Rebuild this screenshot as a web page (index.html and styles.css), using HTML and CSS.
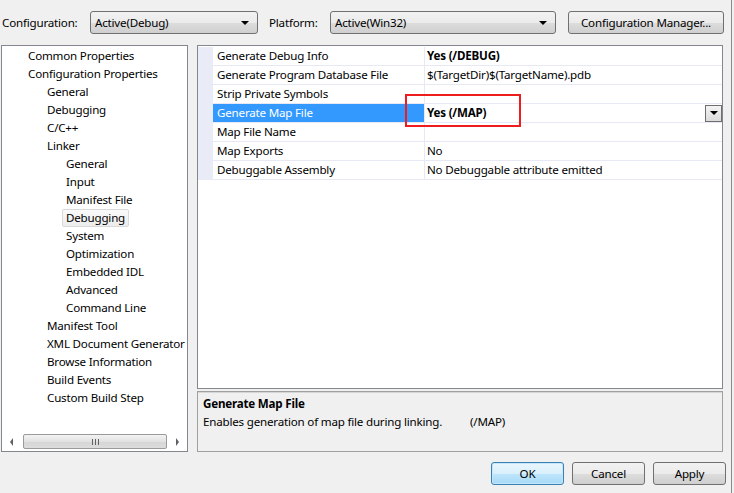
FILE: index.html
```html
<!DOCTYPE html>
<html lang="en">

<head>
  <meta charset="UTF-8">
  <meta name="viewport" content="width=device-width, initial-scale=1.0">
  <link rel="stylesheet" href="styles.css">
</head>

<body>
  <div class="dialog">
    <div class="toolbar">
      <span class="toolbar-label">Configuration:</span>
      <div class="combo combo-config">
        <span>Active(Debug)</span>
        <span class="combo-arrow"></span>
      </div>
      <span class="toolbar-label platform-label">Platform:</span>
      <div class="combo combo-platform">
        <span>Active(Win32)</span>
        <span class="combo-arrow"></span>
      </div>
      <button class="btn btn-manager">Configuration Manager...</button>
    </div>

    <div class="main">
      <div class="tree-panel">
        <div class="tree">
          <div class="node l1">Common Properties</div>
          <div class="node l1">Configuration Properties</div>
          <div class="node l2">General</div>
          <div class="node l2">Debugging</div>
          <div class="node l2">C/C++</div>
          <div class="node l2">Linker</div>
          <div class="node l3">General</div>
          <div class="node l3">Input</div>
          <div class="node l3">Manifest File</div>
          <div class="node l3"><span class="node-selected">Debugging</span></div>
          <div class="node l3">System</div>
          <div class="node l3">Optimization</div>
          <div class="node l3">Embedded IDL</div>
          <div class="node l3">Advanced</div>
          <div class="node l3">Command Line</div>
          <div class="node l2">Manifest Tool</div>
          <div class="node l2">XML Document Generator</div>
          <div class="node l2">Browse Information</div>
          <div class="node l2">Build Events</div>
          <div class="node l2">Custom Build Step</div>
        </div>
        <div class="hscroll">
          <span class="scroll-arrow arrow-left"></span>
          <div class="scroll-thumb"><span class="grip"></span></div>
          <span class="scroll-arrow arrow-right"></span>
        </div>
      </div>

      <div class="right-col">
        <div class="grid">
          <div class="grid-row">
            <div class="gutter"></div>
            <div class="cell-name">Generate Debug Info</div>
            <div class="cell-value bold">Yes (/DEBUG)</div>
          </div>
          <div class="grid-row">
            <div class="gutter"></div>
            <div class="cell-name">Generate Program Database File</div>
            <div class="cell-value">$(TargetDir)$(TargetName).pdb</div>
          </div>
          <div class="grid-row">
            <div class="gutter"></div>
            <div class="cell-name">Strip Private Symbols</div>
            <div class="cell-value"></div>
          </div>
          <div class="grid-row selected">
            <div class="gutter"></div>
            <div class="cell-name">Generate Map File</div>
            <div class="cell-value bold">Yes (/MAP)
              <span class="cell-drop"><span class="combo-arrow"></span></span>
            </div>
          </div>
          <div class="grid-row">
            <div class="gutter"></div>
            <div class="cell-name">Map File Name</div>
            <div class="cell-value"></div>
          </div>
          <div class="grid-row">
            <div class="gutter"></div>
            <div class="cell-name">Map Exports</div>
            <div class="cell-value">No</div>
          </div>
          <div class="grid-row">
            <div class="gutter"></div>
            <div class="cell-name">Debuggable Assembly</div>
            <div class="cell-value">No Debuggable attribute emitted</div>
          </div>
          <div class="highlight-box"></div>
        </div>

        <div class="description">
          <div class="desc-title">Generate Map File</div>
          <div class="desc-text">Enables generation of map file during linking.<span class="desc-switch">(/MAP)</span></div>
        </div>
      </div>
    </div>

    <div class="footer">
      <button class="btn btn-default">OK</button>
      <button class="btn">Cancel</button>
      <button class="btn">Apply</button>
    </div>
  </div>
</body>

</html>
```

FILE: styles.css
```css
body {
  margin: 0;
  background-color: #f0f0f0;
  font-family: "Segoe UI", "Noto Sans", sans-serif;
  font-size: 11.6px;
  letter-spacing: -0.2px;
  color: #000;
}

.dialog {
  width: 732px;
  height: 493px;
  border-right: 1px solid #8c8c8c;
  box-sizing: border-box;
  display: flex;
  flex-direction: column;
}

/* Top bar */
.toolbar {
  display: flex;
  align-items: center;
  height: 45px;
  box-sizing: border-box;
}

.toolbar-label {
  margin-left: 2px;
  width: 88px;
}

.platform-label {
  margin-left: 11px;
  width: 61px;
}

.combo {
  height: 23px;
  box-sizing: border-box;
  border: 1px solid #707070;
  border-radius: 3px;
  background: linear-gradient(#f2f2f2 0%, #ebebeb 50%, #dddddd 51%, #cfcfcf 100%);
  display: flex;
  align-items: center;
  justify-content: space-between;
  padding: 0 8px 0 4px;
}

.combo-config {
  width: 168px;
}

.combo-platform {
  width: 226px;
}

.combo-arrow {
  width: 0;
  height: 0;
  border-left: 4px solid transparent;
  border-right: 4px solid transparent;
  border-top: 4px solid #000;
}

.btn {
  font-family: inherit;
  font-size: inherit;
  letter-spacing: inherit;
  color: #000;
  height: 23px;
  box-sizing: border-box;
  border: 1px solid #707070;
  border-radius: 3px;
  background: linear-gradient(#f2f2f2 0%, #ebebeb 50%, #dddddd 51%, #cfcfcf 100%);
  padding: 0;
}

.btn-manager {
  margin-left: 12px;
  width: 156px;
}

/* Main area */
.main {
  display: flex;
  height: 407px;
}

.tree-panel {
  width: 187px;
  margin-left: 1px;
  border: 1px solid #828790;
  background: #fff;
  box-sizing: border-box;
  display: flex;
  flex-direction: column;
  justify-content: space-between;
}

.tree {
  padding-top: 1px;
}

.node {
  height: 18px;
  line-height: 18px;
  white-space: nowrap;
}

.l1 {
  padding-left: 26px;
}

.l2 {
  padding-left: 45px;
}

.l3 {
  padding-left: 64px;
}

.node-selected {
  display: inline-block;
  margin-left: -4px;
  padding: 0 3px;
  height: 16px;
  line-height: 16px;
  border: 1px solid #d9d9d9;
  border-radius: 2px;
  background: linear-gradient(#fafafa, #ececec);
}

.hscroll {
  height: 17px;
  display: flex;
  align-items: center;
  margin-bottom: 1px;
  padding: 0 3px;
  background: #fff;
}

.scroll-arrow {
  width: 0;
  height: 0;
  border-top: 4px solid transparent;
  border-bottom: 4px solid transparent;
}

.arrow-left {
  border-right: 3px solid #606060;
  margin: 0 10px 0 5px;
}

.arrow-right {
  border-left: 3px solid #606060;
  margin: 0 5px 0 9px;
}

.scroll-thumb {
  flex: 1;
  height: 15px;
  box-sizing: border-box;
  border: 1px solid #9a9a9a;
  border-radius: 2px;
  background: linear-gradient(#f3f3f3, #e2e2e2 50%, #d6d6d6 51%, #dcdcdc);
  display: flex;
  align-items: center;
  justify-content: center;
}

.grip {
  width: 7px;
  height: 6px;
  background: repeating-linear-gradient(90deg, #606060 0 1px, transparent 1px 3px);
}

.right-col {
  margin-left: 9px;
  width: 526px;
  display: flex;
  flex-direction: column;
}

/* Property grid */
.grid {
  position: relative;
  height: 344px;
  padding-top: 1px;
  border: 1px solid #828790;
  background: #fff;
  box-sizing: border-box;
}

.grid-row {
  display: flex;
  height: 19px;
}

.gutter {
  width: 15px;
  background: #e9ecf7;
}

.cell-name {
  width: 207px;
  padding-left: 4px;
  line-height: 18px;
  border-bottom: 1px solid #e6e9f4;
  border-right: 1px solid #e6e9f4;
  white-space: nowrap;
  overflow: hidden;
}

.cell-value {
  flex: 1;
  padding-left: 2px;
  line-height: 18px;
  border-bottom: 1px solid #e6e9f4;
  display: flex;
  justify-content: space-between;
  align-items: center;
}

.bold {
  font-weight: bold;
}

.selected .cell-name {
  background: #3399ff;
  color: #fff;
}

.cell-drop {
  width: 17px;
  height: 17px;
  box-sizing: border-box;
  border: 1px solid #6e6e6e;
  background: linear-gradient(#f4f4f4, #dcdcdc);
  display: flex;
  align-items: center;
  justify-content: center;
}

.highlight-box {
  position: absolute;
  left: 207px;
  top: 48px;
  width: 112px;
  height: 29px;
  border: 2px solid #ee1c1c;
}

/* Description */
.description {
  margin-top: 2px;
  height: 61px;
  border: 1px solid #a0a0a0;
  box-shadow: inset 0 1px 0 #d6d6d6;
  box-sizing: border-box;
  padding: 3px 5px;
}

.desc-title {
  font-weight: bold;
  line-height: 18px;
}

.desc-text {
  line-height: 18px;
}

.desc-switch {
  margin-left: 28px;
}

/* Footer */
.footer {
  display: flex;
  justify-content: flex-end;
  gap: 8px;
  padding: 10px 5px 0 0;
}

.footer .btn {
  width: 73px;
}

.btn-default {
  border-color: #3c7fb1;
  background: linear-gradient(#eaf6fd 0%, #d9f0fc 50%, #bee6fd 51%, #a7d9f5 100%);
  box-shadow: inset 0 0 0 1px #c6e7fa;
}
```
